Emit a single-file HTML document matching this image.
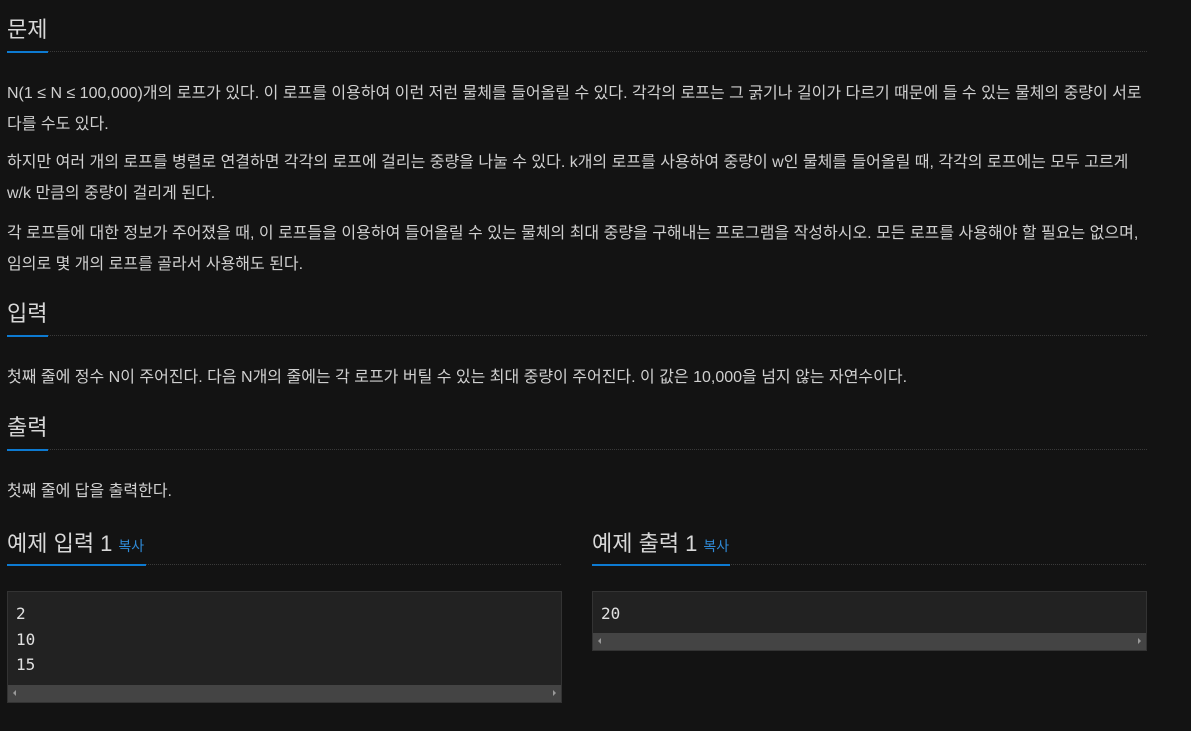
<!DOCTYPE html>
<html><head><meta charset="utf-8"><style>
html,body{margin:0;padding:0;background:#131313;width:1191px;height:731px;overflow:hidden}
body{font-family:"Liberation Sans","Noto Sans CJK KR",sans-serif;color:#cfcfcf;position:relative}
.h{position:absolute;font-size:22px;line-height:26px;color:#d8d8d8;white-space:nowrap}
.h .c{font-size:14px;color:#2f8ad6;margin-left:6px}
.ul{position:absolute;height:0;border-bottom:1px dotted #3a3a3a}
.bl{position:absolute;height:2px;background:#0d7ad1}
.p{position:absolute;left:7px;font-size:16px;line-height:31px;white-space:nowrap;color:#d0d0d0}
.box{position:absolute;background:#222;border:1px solid #333;box-sizing:border-box}
.box pre{margin:0;position:absolute;left:8px;top:9px;font-family:"DejaVu Sans Mono","Liberation Mono",monospace;font-size:16px;line-height:25.5px;color:#e0e0e0}
.sb{position:absolute;left:0;right:0;bottom:0;height:17px;background:#444}
.sb:before{content:"";position:absolute;left:5px;top:5px;border:3px solid transparent;border-right:3px solid #999;border-left:0;height:0}
.sb:after{content:"";position:absolute;right:5px;top:5px;border:3px solid transparent;border-left:3px solid #999;border-right:0;height:0}
</style></head><body>
<div class="h" style="left:7px;top:17px">문제</div>
<div class="ul" style="left:7px;width:1140px;top:51px"></div><div class="bl" style="left:7px;width:41px;top:51px"></div>
<div class="p" style="top:78px">N(1 ≤ N ≤ 100,000)개의 로프가 있다. 이 로프를 이용하여 이런 저런 물체를 들어올릴 수 있다. 각각의 로프는 그 굵기나 길이가 다르기 때문에 들 수 있는 물체의 중량이 서로<br>다를 수도 있다.</div>
<div class="p" style="top:147px">하지만 여러 개의 로프를 병렬로 연결하면 각각의 로프에 걸리는 중량을 나눌 수 있다. k개의 로프를 사용하여 중량이 w인 물체를 들어올릴 때, 각각의 로프에는 모두 고르게<br>w/k 만큼의 중량이 걸리게 된다.</div>
<div class="p" style="top:218px">각 로프들에 대한 정보가 주어졌을 때, 이 로프들을 이용하여 들어올릴 수 있는 물체의 최대 중량을 구해내는 프로그램을 작성하시오. 모든 로프를 사용해야 할 필요는 없으며,<br>임의로 몇 개의 로프를 골라서 사용해도 된다.</div>
<div class="h" style="left:7px;top:301px">입력</div>
<div class="ul" style="left:7px;width:1140px;top:335px"></div><div class="bl" style="left:7px;width:41px;top:335px"></div>
<div class="p" style="top:362px">첫째 줄에 정수 N이 주어진다. 다음 N개의 줄에는 각 로프가 버틸 수 있는 최대 중량이 주어진다. 이 값은 10,000을 넘지 않는 자연수이다.</div>
<div class="h" style="left:7px;top:415px">출력</div>
<div class="ul" style="left:7px;width:1140px;top:449px"></div><div class="bl" style="left:7px;width:41px;top:449px"></div>
<div class="p" style="top:476px">첫째 줄에 답을 출력한다.</div>
<div class="h" style="left:7px;top:531px">예제 입력 1<span class="c">복사</span></div>
<div class="ul" style="left:7px;width:554px;top:564px"></div><div class="bl" style="left:7px;width:139px;top:564px"></div>
<div class="h" style="left:592px;top:531px">예제 출력 1<span class="c">복사</span></div>
<div class="ul" style="left:592px;width:554px;top:564px"></div><div class="bl" style="left:592px;width:138px;top:564px"></div>
<div class="box" style="left:7px;top:591px;width:555px;height:112px"><pre>2
10
15</pre><div class="sb"></div></div>
<div class="box" style="left:592px;top:591px;width:555px;height:60px"><pre>20</pre><div class="sb"></div></div>
</body></html>
